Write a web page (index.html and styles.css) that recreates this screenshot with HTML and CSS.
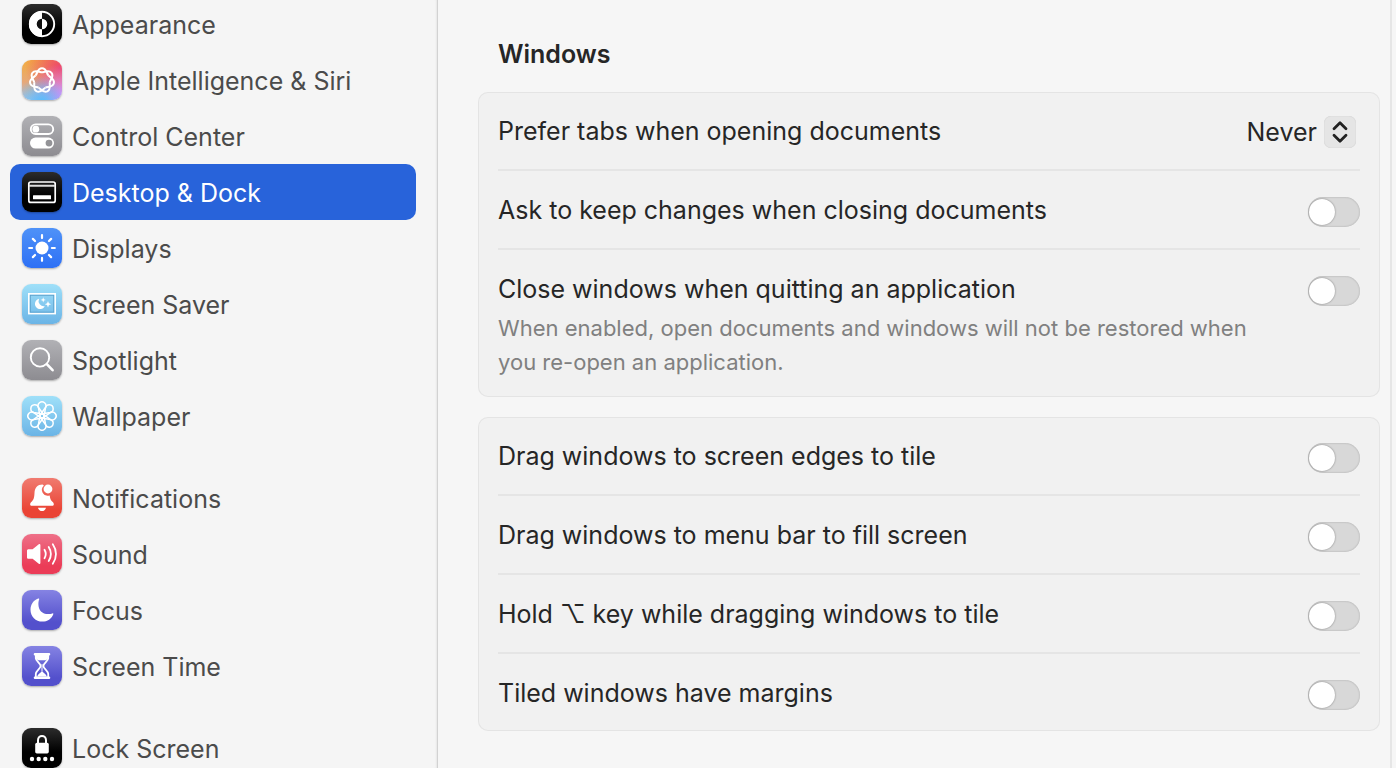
FILE: index.html
```html
<!DOCTYPE html>
<html lang="en">
<head>
    <meta charset="UTF-8">
    <meta name="viewport" content="width=device-width, initial-scale=1.0">
    <title>Desktop &amp; Dock</title>
    <link rel="stylesheet" href="styles.css">
</head>
<body>

    <nav class="sidebar">
        <div class="group">
            <a class="item" href="#appearance">
                <svg class="icon black" viewBox="0 0 40 40">
                    <circle cx="20" cy="20" r="12.2" fill="none" stroke="#fff" stroke-width="1.9"/>
                    <path d="M20 7a13 13 0 0 0 0 26z" fill="#fff"/>
                    <path d="M20 14.7a5.3 5.3 0 0 0 0 10.600z" fill="#111"/>
                    <path d="M20 14.7a5.3 5.3 0 0 1 0 10.600z" fill="#fff"/>
                </svg>
                Appearance
            </a>
            <a class="item" href="#siri">
                <svg class="icon siri" viewBox="0 0 40 40">
                    <defs>
                        <path id="arch" d="M-6.3-5C-4.7-7-4.4-12.2 0-12.2S4.7-7 6.3-5"/>
                    </defs>
                    <g transform="translate(20 20.4)" fill="none" stroke="#fff" stroke-width="2">
                        <use href="#arch"/>
                        <use href="#arch" transform="rotate(51.43)"/>
                        <use href="#arch" transform="rotate(102.86)"/>
                        <use href="#arch" transform="rotate(154.29)"/>
                        <use href="#arch" transform="rotate(205.71)"/>
                        <use href="#arch" transform="rotate(257.14)"/>
                        <use href="#arch" transform="rotate(308.57)"/>
                    </g>
                </svg>
                Apple Intelligence &amp; Siri
            </a>
            <a class="item" href="#control-center">
                <svg class="icon gray" viewBox="0 0 40 40">
                    <rect x="8.8" y="8.4" width="22.4" height="9.6" rx="4.8" fill="none" stroke="#fff" stroke-width="1.9"/>
                    <circle cx="13.8" cy="13.2" r="3.4" fill="#fff"/>
                    <rect x="8" y="21.6" width="24" height="11" rx="5.5" fill="#fff"/>
                    <circle cx="27" cy="27.1" r="3.4" fill="#939397"/>
                </svg>
                Control Center
            </a>
            <a class="item selected" href="#desktop-dock" aria-current="page">
                <svg class="icon black" viewBox="0 0 40 40">
                    <rect x="6.8" y="10" width="26.4" height="20.4" rx="2" fill="none" stroke="#fff" stroke-width="1.7"/>
                    <path d="M7 13.8h26" stroke="#ddd" stroke-width="2"/>
                    <rect x="11" y="23.2" width="18" height="4" rx=".5" fill="#fff"/>
                </svg>
                Desktop &amp; Dock
            </a>
            <a class="item" href="#displays">
                <svg class="icon blue" viewBox="0 0 40 40">
                    <circle cx="20" cy="20" r="6.5" fill="#fff"/>
                    <path d="M20 7.2v2.9M20 29.9v2.9M7.2 20h2.9M29.9 20h2.9M10.900 10.900l2.1 2.1M27 27l2.1 2.1M10.900 29.1L13 27M27 13l2.1-2.1" stroke="#fff" stroke-width="2.2" stroke-linecap="round"/>
                </svg>
                Displays
            </a>
            <a class="item" href="#screen-saver">
                <svg class="icon sky" viewBox="0 0 40 40">
                    <rect x="6.8" y="9.8" width="26.4" height="19.8" fill="none" stroke="#fff" stroke-width="1.6"/>
                    <rect x="8.3" y="11.3" width="23.4" height="16.8" fill="none" stroke="#5b9ec9" stroke-width=".8"/>
                    <path d="M17 14.8a5.2 5.2 0 1 0 5.8 7.4 5.4 5.4 0 0 1-5.8-7.4z" fill="#fff"/>
                    <path d="M21.2 13.2l.7 2 2 .7-2 .7-.7 2-.7-2-2-.7 2-.7zM26 17l.9 2.300 2.300.9-2.300.9-.9 2.300-.9-2.300-2.300-.9 2.300-.9z" fill="#fff"/>
                </svg>
                Screen Saver
            </a>
            <a class="item" href="#spotlight">
                <svg class="icon gray" viewBox="0 0 40 40">
                    <circle cx="18" cy="17.4" r="9.2" fill="none" stroke="#fff" stroke-width="1.9"/>
                    <path d="M24.8 24.2l5.8 6" stroke="#fff" stroke-width="2.6" stroke-linecap="round"/>
                </svg>
                Spotlight
            </a>
            <a class="item" href="#wallpaper">
                <svg class="icon sky" viewBox="0 0 40 40">
                    <defs>
                        <path id="petal" d="M2.600 0L-3.3-8.2A3.9 3.9 0 1 1 3.3-8.2L-2.600 0"/>
                    </defs>
                    <g transform="translate(20 20)" fill="none" stroke="#fff" stroke-width="1.5">
                        <use href="#petal"/>
                        <use href="#petal" transform="rotate(45)"/>
                        <use href="#petal" transform="rotate(90)"/>
                        <use href="#petal" transform="rotate(135)"/>
                        <use href="#petal" transform="rotate(180)"/>
                        <use href="#petal" transform="rotate(225)"/>
                        <use href="#petal" transform="rotate(270)"/>
                        <use href="#petal" transform="rotate(315)"/>
                    </g>
                </svg>
                Wallpaper
            </a>
        </div>

        <div class="group">
            <a class="item" href="#notifications">
                <svg class="icon red" viewBox="0 0 40 40">
                    <path d="M20.5 6.6c-5 0-7.8 3.4-8 8.2-.2 5-.8 7-3.2 9.2-1.6 1.5-1.6 3.8.6 3.8h20.2c2.2 0 2.2-2.3.6-3.8-2-1.8-2.7-3.5-3-6.6a5.8 5.8 0 0 1-5.8-9.8z" fill="#fff"/>
                    <circle cx="26" cy="11" r="4.4" fill="#fff"/>
                    <path d="M16 29.7h8c-.5 2.2-2 3.4-4 3.4s-3.5-1.2-4-3.4z" fill="#fff"/>
                </svg>
                Notifications
            </a>
            <a class="item" href="#sound">
                <svg class="icon pink" viewBox="0 0 40 40">
                    <path d="M6.6 15.2h4l6.2-5c.7-.5 1.6-.2 1.6.7v18.2c0 .9-.9 1.2-1.6.7l-6.2-5h-4c-1 0-1.6-.6-1.6-1.6v-6.4c0-1 .6-1.6 1.6-1.6z" fill="#fff"/>
                    <g fill="none" stroke="#fff" stroke-width="1.8" stroke-linecap="round">
                        <path d="M22.5 15.7c1.6 2.7 1.6 5.9 0 8.6"/>
                        <path d="M26.7 13c2.7 4.3 2.7 9.7 0 14"/>
                        <path d="M30.8 10.2c4.2 6 4.2 13.6 0 19.6"/>
                    </g>
                </svg>
                Sound
            </a>
            <a class="item" href="#focus">
                <svg class="icon purple" viewBox="0 0 40 40">
                    <path d="M16.2 8.5C11.6 10 8.5 14.6 8.5 19.7 8.5 26.4 13.7 31.6 20.3 31.6c5 0 9.5-2.9 11-7.4.2-.7-.3-1-.9-.8-1.2.5-2.7.7-4.2.7-6 0-9.8-4-9.8-9.9 0-1.7.3-3.6.8-4.9.2-.6-.3-1-1-.8z" fill="#fff"/>
                </svg>
                Focus
            </a>
            <a class="item" href="#screen-time">
                <svg class="icon purple" viewBox="0 0 40 40">
                    <path d="M13.8 8.4h12.4v3.8c0 3-4.8 5.3-4.8 7.8s4.8 4.8 4.8 7.8v3.8H13.8v-3.8c0-3 4.8-5.3 4.8-7.8s-4.8-4.8-4.8-7.8z" fill="none" stroke="#fff" stroke-width="1.8"/>
                    <path d="M13 8.3h14M13 31.7h14" stroke="#fff" stroke-width="2.6" stroke-linecap="round"/>
                    <path d="M14 8h12v4.5l-2 1.7h-8l-2-1.7zM15.2 30.5c.5-2.3 3-3.5 4.8-5 1.8 1.5 4.3 2.7 4.8 5zM19.5 18h1v9h-1z" fill="#fff"/>
                </svg>
                Screen Time
            </a>
        </div>

        <div class="group">
            <a class="item" href="#lock-screen">
                <svg class="icon black" viewBox="0 0 40 40">
                    <path d="M16 15.5v-3.2c0-5.8 8-5.8 8 0v3.2" fill="none" stroke="#fff" stroke-width="2"/>
                    <rect x="13.2" y="14.8" width="13.6" height="10.6" rx="1.6" fill="#fff"/>
                    <g fill="#fff">
                        <circle cx="10" cy="31" r="2.2"/>
                        <circle cx="16.7" cy="31" r="2.2"/>
                        <circle cx="23.3" cy="31" r="2.2"/>
                        <circle cx="30" cy="31" r="2.2"/>
                    </g>
                </svg>
                Lock Screen
            </a>
        </div>
    </nav>

    <main class="content">
        <h2>Windows</h2>

        <section class="card">
            <div class="row">
                <label class="text" for="tabs">Prefer tabs when opening documents</label>
                <div class="popup">
                    <select id="tabs">
                        <option>Never</option>
                        <option>Always</option>
                        <option>In Full Screen</option>
                    </select>
                    <svg class="arrows" viewBox="0 0 32 32">
                        <path d="M10 12.8l6-6 6 6M10 19.2l6 6 6-6" fill="none" stroke="#222" stroke-width="2.8" stroke-linecap="round" stroke-linejoin="round"/>
                    </svg>
                </div>
            </div>
            <div class="row">
                <label class="text" for="keep">Ask to keep changes when closing documents</label>
                <input class="switch" type="checkbox" role="switch" id="keep">
            </div>
            <div class="row">
                <div class="text">
                    <label for="close">Close windows when quitting an application</label>
                    <p>When enabled, open documents and windows will not be restored when you re-open an application.</p>
                </div>
                <input class="switch" type="checkbox" role="switch" id="close">
            </div>
        </section>

        <section class="card">
            <div class="row">
                <label class="text" for="edges">Drag windows to screen edges to tile</label>
                <input class="switch" type="checkbox" role="switch" id="edges">
            </div>
            <div class="row">
                <label class="text" for="menubar">Drag windows to menu bar to fill screen</label>
                <input class="switch" type="checkbox" role="switch" id="menubar">
            </div>
            <div class="row">
                <label class="text" for="option">Hold ⌥ key while dragging windows to tile</label>
                <input class="switch" type="checkbox" role="switch" id="option">
            </div>
            <div class="row">
                <label class="text" for="margins">Tiled windows have margins</label>
                <input class="switch" type="checkbox" role="switch" id="margins">
            </div>
        </section>
    </main>

    <div class="scroll-track"></div>

</body>
</html>
```
FILE: styles.css
```css
body {
    display: flex;
    height: 100vh;
    margin: 0;
    overflow: hidden;
    background-color: #f6f6f6;
    color: #262626;
    font-family: Inter, "Liberation Sans", sans-serif;
    font-size: 25px;
}

/* Sidebar */
.sidebar {
    flex: none;
    box-sizing: border-box;
    width: 438px;
    padding: 0 21px 0 10px;
    border-right: 1px solid #d2d2d2;
    box-shadow: inset -2px 0 2px -1px rgba(0, 0, 0, 0.06);
    background-color: #f5f5f5;
}

.group {
    margin-bottom: 26px;
}

/* the list is scrolled slightly under the top edge */
.group:first-child {
    margin-top: -4px;
}

.item {
    display: flex;
    align-items: center;
    gap: 10px;
    box-sizing: border-box;
    height: 56px;
    padding: 2px 12px 0;
    border-radius: 10px;
    color: #4b4b4b;
    text-decoration: none;
}

.item.selected {
    background-color: #2863da;
    color: #fff;
}

.icon {
    flex: none;
    width: 40px;
    height: 40px;
    margin-bottom: 2px;
    border-radius: 9px;
    box-shadow: 0 1px 2px rgba(0, 0, 0, 0.3);
}

.black {
    background: linear-gradient(#2c2c2c, #000 60%);
}

.gray {
    background: linear-gradient(#b1b1b5, #8d8c91);
}

.blue {
    background: linear-gradient(#4f92f8, #2d70f5);
}

.sky {
    background: linear-gradient(#9fe0f9, #6bb4e6);
}

.red {
    background: linear-gradient(#f07b70, #ea4435 80%);
}

.pink {
    background: linear-gradient(#ee7088, #eb3c57 80%);
}

.purple {
    background: linear-gradient(#8583e3, #5350cc 80%);
}

.siri {
    background:
        radial-gradient(circle at 50% 105%, #55bdfb, rgba(85, 189, 251, 0) 55%),
        radial-gradient(circle at 100% 90%, #d88cfb, rgba(216, 140, 251, 0) 60%),
        radial-gradient(circle at 95% 20%, #ee4468, rgba(238, 68, 104, 0) 70%),
        linear-gradient(#f3ad40, #e6a878 55%, #a9c4e8);
}

/* Settings */
.content {
    flex: 1;
    padding: 34px 10px 20px 40px;
}

h2 {
    margin: 0 0 18px 20px;
    font-size: 25px;
    font-weight: 600;
    line-height: 40px;
}

.card {
    margin-bottom: 20px;
    padding: 0 20px;
    border-radius: 10px;
    background-color: #f1f1f1;
    box-shadow: inset 0 0 0 1px #e4e4e4;
}

.row {
    display: flex;
    align-items: flex-start;
    justify-content: space-between;
    padding: 20px 0 18px;
    border-bottom: 2px solid #e5e5e5;
}

.row:last-child {
    border-bottom: none;
}

.text {
    max-width: 780px;
    line-height: 39px;
}

.text p {
    margin: 2px 0 0;
    color: #808080;
    font-size: 22px;
    line-height: 34px;
}

.popup {
    display: grid;
    align-items: center;
    padding-right: 4px;
}

.popup select,
.arrows {
    grid-area: 1 / 1;
}

.popup select {
    height: 39px;
    padding: 0 39px 0 0;
    border: none;
    appearance: none;
    background: none;
    color: inherit;
    font: inherit;
    text-align-last: right;
}

.arrows {
    justify-self: end;
    width: 32px;
    height: 32px;
    border-radius: 7px;
    background-color: #e5e5e5;
    box-shadow: inset 0 0 1px rgba(0, 0, 0, 0.2);
    pointer-events: none;
}

.switch {
    flex: none;
    display: flex;
    align-items: center;
    width: 52px;
    height: 30px;
    margin: 6px 0 0;
    padding: 0 1px;
    border-radius: 15px;
    appearance: none;
    background-color: #d8d8d8;
    box-shadow: inset 0 0 2px rgba(0, 0, 0, 0.25);
}

.switch::before {
    content: "";
    width: 26px;
    height: 26px;
    border-radius: 50%;
    background-color: #fff;
    box-shadow: 0 0 2px rgba(0, 0, 0, 0.45);
}

.switch:checked {
    justify-content: flex-end;
    background-color: #2863da;
}

.scroll-track {
    flex: none;
    width: 4px;
    border-left: 2px solid #e6e6e6;
}
```
